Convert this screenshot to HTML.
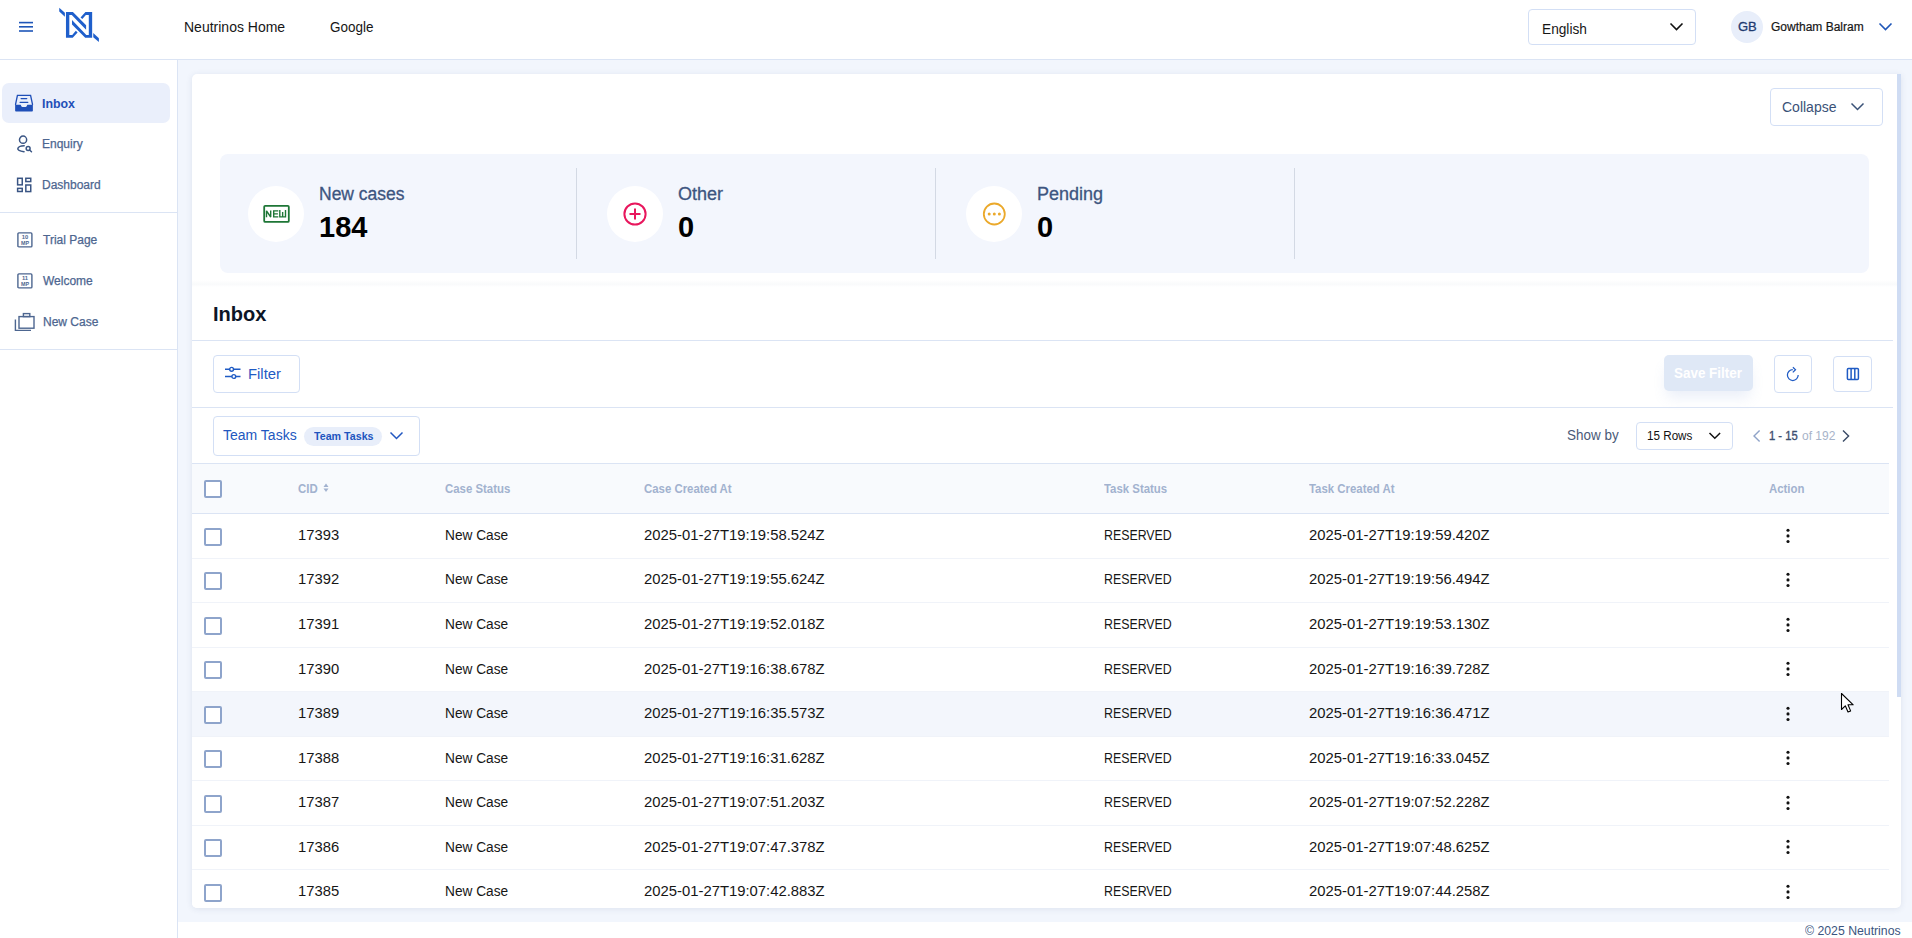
<!DOCTYPE html>
<html><head><meta charset="utf-8">
<style>
*{box-sizing:border-box;margin:0;padding:0}
html,body{width:1912px;height:938px;overflow:hidden;background:#f2f6fd;font-family:"Liberation Sans",sans-serif;color:#161616}
.a{position:absolute}
.t{position:absolute;white-space:nowrap;line-height:1}
#hdr{left:0;top:0;width:1912px;height:60px;background:#fff;border-bottom:1px solid #dbe4f4}
#side{left:0;top:60px;width:178px;height:878px;background:#fff;border-right:1px solid #dbe4f4}
#foot{left:178px;top:922px;width:1734px;height:16px;background:#fff}
#card{left:192px;top:74px;width:1709px;height:834px;background:#fff;border-radius:5px 0 5px 5px;box-shadow:0 1px 6px rgba(40,60,110,.10);overflow:hidden}
.navt{font-size:12px;color:#4d6690;-webkit-text-stroke:0.25px #4d6690}
.hline{height:1px;background:#dbe4f4}
.box{position:absolute;border:1px solid #d3dff5;border-radius:4px;background:#fff}
.th{font-size:12px;font-weight:700;color:#a2b2cf}
.td{font-size:14px;color:#161616}
.cb{position:absolute;width:18px;height:18px;border:2px solid #8ea4cb;border-radius:2px;background:#fff}
.row{position:absolute;left:0;width:1697px;height:45px;border-bottom:1px solid #eef2f9}
.dots{position:absolute;width:4px;height:15px}

.c1{transform:scaleX(1.056);transform-origin:0 0}
.c2{transform:scaleX(0.979);transform-origin:0 0}
.c3{transform:scaleX(1.06);transform-origin:0 0}
.c4{transform:scaleX(0.883);transform-origin:0 0}
.th{transform:scaleX(0.95);transform-origin:0 0}
</style></head>
<body>
<!-- HEADER -->
<div id="hdr" class="a">
  <svg class="a" style="left:19px;top:21px" width="15" height="12" viewBox="0 0 15 12"><g fill="#1f56b8"><rect x="0" y="0.8" width="14" height="1.6"/><rect x="0" y="5" width="14" height="1.6"/><rect x="0" y="9.2" width="14" height="1.6"/></g></svg>
  <svg class="a" style="left:55px;top:4px" width="50" height="42" viewBox="0 0 1117 938"><g fill="#1f5fcb">
    <polygon points="245,180 400,180 695,475 695,575 375,245 320,245 320,690 385,690 465,600 505,635 395,755 245,755"/>
    <polygon points="830,755 675,755 380,460 380,360 700,690 755,690 755,245 690,245 610,335 570,300 680,180 830,180"/>
    <polygon points="95,85 220,195 220,285 95,170"/>
    <polygon points="980,850 855,740 855,650 980,765"/>
  </g></svg>
  <div class="t" style="left:184px;top:20px;font-size:14px">Neutrinos Home</div>
  <div class="t" style="left:330px;top:20px;font-size:14px;transform:scaleX(0.962);transform-origin:0 0">Google</div>
  <div class="box" style="left:1528px;top:9px;width:168px;height:36px;border-radius:4px"></div>
  <div class="t" style="left:1542px;top:22px;font-size:14px;transform:scaleX(0.978);transform-origin:0 0">English</div>
  <svg class="a" style="left:1669px;top:22px" width="15" height="10" viewBox="0 0 15 10"><polyline points="1.5,1.5 7.5,7.5 13.5,1.5" fill="none" stroke="#111" stroke-width="1.6"/></svg>
  <div class="a" style="left:1731px;top:11px;width:32px;height:32px;border-radius:50%;background:#e8eefa"></div>
  <div class="t" style="left:1738px;top:20px;font-size:13px;font-weight:400;color:#1e3a70;-webkit-text-stroke:0.3px #1e3a70">GB</div>
  <div class="t" style="left:1771px;top:21px;font-size:12px;color:#161616;-webkit-text-stroke:0.2px #161616">Gowtham Balram</div>
  <svg class="a" style="left:1878px;top:22px" width="15" height="10" viewBox="0 0 15 10"><polyline points="1.5,1.5 7.5,7.5 13.5,1.5" fill="none" stroke="#1f56b8" stroke-width="1.6"/></svg>
</div>

<!-- SIDEBAR -->
<div id="side" class="a">
  <div class="a" style="left:2px;top:23px;width:168px;height:40px;border-radius:7px;background:#eaeffb"></div>
  <svg class="a" style="left:10px;top:30px" width="30" height="26" viewBox="0 0 1082 938"><g fill="none" stroke="#1f4fb8" stroke-linecap="round">
    <path d="M200,520 L268,192 L742,192 L812,520" stroke-width="48"/>
    <path d="M400,310 L605,310" stroke-width="42"/><path d="M362,445 L645,445" stroke-width="42"/></g>
    <path fill="#1f4fb8" d="M185,530 L385,530 L410,590 Q420,610 450,610 L560,610 Q590,610 600,590 L625,530 L825,530 L825,750 Q825,780 795,780 L215,780 Q185,780 185,750 Z"/>
  </svg>
  <div class="t" style="left:42px;top:38px;font-size:12px;font-weight:700;color:#1f4fb8;transform:scaleX(1.03);transform-origin:0 0">Inbox</div>

  <svg class="a" style="left:10px;top:70px" width="30" height="70" viewBox="0 0 402 938"><g fill="none" stroke="#3a5584" stroke-width="20" stroke-linecap="round">
    <circle cx="175" cy="130" r="48"/>
    <path d="M190,212 C95,215 60,280 188,290"/>
    <circle cx="243" cy="248" r="26"/><path d="M262,268 L288,292"/>
    <rect x="102" y="647" width="62" height="88"/><rect x="212" y="647" width="66" height="44"/>
    <rect x="102" y="782" width="62" height="42"/><rect x="212" y="737" width="66" height="88"/>
  </g></svg>
  <div class="t navt" style="left:42px;top:78px">Enquiry</div>
  <div class="t navt" style="left:42px;top:119px">Dashboard</div>
  <div class="a hline" style="left:0;top:152px;width:177px"></div>

  <svg class="a" style="left:17px;top:172px" width="16" height="16" viewBox="0 0 16 16"><rect x="0.9" y="0.9" width="14" height="14" rx="1" fill="none" stroke="#4d6690" stroke-width="1.4"/>
    <text x="8" y="7.2" font-size="5.8" font-weight="700" fill="#4d6690" text-anchor="middle" font-family="Liberation Sans">10</text>
    <text x="8" y="12.6" font-size="5.4" font-weight="700" fill="#4d6690" text-anchor="middle" font-family="Liberation Sans">MP</text></svg>
  <div class="t navt" style="left:43px;top:174px">Trial Page</div>
  <svg class="a" style="left:17px;top:213px" width="16" height="16" viewBox="0 0 16 16"><rect x="0.9" y="0.9" width="14" height="14" rx="1" fill="none" stroke="#4d6690" stroke-width="1.4"/>
    <text x="8" y="7.2" font-size="5.8" font-weight="700" fill="#4d6690" text-anchor="middle" font-family="Liberation Sans">11</text>
    <text x="8" y="12.6" font-size="5.4" font-weight="700" fill="#4d6690" text-anchor="middle" font-family="Liberation Sans">MP</text></svg>
  <div class="t navt" style="left:43px;top:215px">Welcome</div>
  <svg class="a" style="left:14px;top:252px" width="22" height="20" viewBox="0 0 22 20"><g fill="none" stroke="#4d6690" stroke-width="1.4">
    <rect x="9.4" y="1.6" width="6.4" height="3"/><rect x="5" y="4.6" width="15" height="11.6"/><path d="M1.4,7.4 L1.4,18.4 L17,18.4"/></g></svg>
  <div class="t navt" style="left:43px;top:256px">New Case</div>
  <div class="a hline" style="left:0;top:289px;width:177px"></div>
</div>

<!-- CARD -->
<div id="card" class="a">
<div class="a" style="left:-192px;top:-74px;width:1912px;height:938px">
  <div class="box" style="left:1770px;top:88px;width:113px;height:38px"></div>
  <div class="t" style="left:1782px;top:100px;font-size:14px;color:#3a5277">Collapse</div>
  <svg class="a" style="left:1850px;top:102px" width="15" height="10" viewBox="0 0 15 10"><polyline points="1.5,1.5 7.5,7.5 13.5,1.5" fill="none" stroke="#3a5277" stroke-width="1.5"/></svg>

  <div class="a" style="left:220px;top:154px;width:1649px;height:119px;border-radius:8px;background:#f3f6fd"></div>
  <div class="a" style="left:576px;top:168px;width:1px;height:91px;background:#d3d9e4"></div>
  <div class="a" style="left:935px;top:168px;width:1px;height:91px;background:#d3d9e4"></div>
  <div class="a" style="left:1294px;top:168px;width:1px;height:91px;background:#d3d9e4"></div>

  <div class="a" style="left:248px;top:186px;width:56px;height:56px;border-radius:50%;background:#fff"></div>
  <svg class="a" style="left:263px;top:204px" width="27" height="20" viewBox="0 0 27 20"><rect x="1.2" y="1.8" width="24.6" height="16.1" rx="1" fill="none" stroke="#1e7636" stroke-width="1.8"/>
    <g fill="none" stroke="#1e7636" stroke-width="1.4" stroke-linecap="square"><path d="M3.5,13.2 V6.8 L7.7,13 V6.6" stroke-linecap="butt" stroke-linejoin="bevel"/><path d="M14.6,6.9 H10.7 V12.9 H14.6 M10.7,9.9 H14.2"/><path d="M16.8,6.8 V12.9 H22.5 V6.8 M19.65,8.6 V12.9"/></g></svg>
  <div class="t" style="left:319px;top:185px;font-size:18px;color:#3d5580;-webkit-text-stroke:0.3px #3d5580;transform:scaleX(0.972);transform-origin:0 0">New cases</div>
  <div class="t" style="left:319px;top:213px;font-size:29px;font-weight:700;color:#000">184</div>

  <div class="a" style="left:607px;top:186px;width:56px;height:56px;border-radius:50%;background:#fff"></div>
  <svg class="a" style="left:623px;top:202px" width="25" height="25" viewBox="0 0 25 25"><g fill="none" stroke="#e8175d" stroke-width="2"><circle cx="12" cy="12" r="10.6"/><path d="M12,6.5 V17.5 M6.5,12 H17.5"/></g></svg>
  <div class="t" style="left:678px;top:185px;font-size:18px;color:#3d5580;-webkit-text-stroke:0.3px #3d5580">Other</div>
  <div class="t" style="left:678px;top:213px;font-size:29px;font-weight:700;color:#000">0</div>

  <div class="a" style="left:966px;top:186px;width:56px;height:56px;border-radius:50%;background:#fff"></div>
  <svg class="a" style="left:982px;top:202px" width="25" height="25" viewBox="0 0 25 25"><g fill="#eba92b"><circle cx="12.3" cy="12" r="10.5" fill="none" stroke="#eba92b" stroke-width="1.8"/><circle cx="7.2" cy="12" r="1.5"/><circle cx="12.3" cy="12" r="1.5"/><circle cx="17.4" cy="12" r="1.5"/></g></svg>
  <div class="t" style="left:1037px;top:185px;font-size:18px;color:#3d5580;-webkit-text-stroke:0.3px #3d5580">Pending</div>
  <div class="t" style="left:1037px;top:213px;font-size:29px;font-weight:700;color:#000">0</div>

  <div class="a" style="left:192px;top:280px;width:1705px;height:7px;background:linear-gradient(#fff,#f9fafb 60%,#fff)"></div>

  <div class="t" style="left:213px;top:304px;font-size:20px;font-weight:700;color:#0d1526">Inbox</div>
  <div class="a hline" style="left:192px;top:340px;width:1701px"></div>

  <div class="box" style="left:213px;top:355px;width:87px;height:38px"></div>
  <svg class="a" style="left:224px;top:366px" width="18" height="15" viewBox="0 0 18 15"><g fill="none" stroke="#1f5bc4" stroke-width="1.4"><path d="M1,3.3 H5.7 M9.5,3.3 H16.5 M1,10.5 H7.9 M11.7,10.5 H16.5"/><circle cx="7.6" cy="3.3" r="1.9"/><circle cx="9.8" cy="10.5" r="1.9"/></g></svg>
  <div class="t" style="left:248px;top:367px;font-size:14px;color:#1f5bc4;transform:scaleX(1.06);transform-origin:0 0">Filter</div>

  <div class="a" style="left:1664px;top:355px;width:89px;height:36px;border-radius:5px;background:#dfe8f6;box-shadow:0 9px 14px -3px rgba(120,150,210,.16)"></div>
  <div class="t" style="left:1674px;top:366px;font-size:14px;font-weight:700;color:#fff;transform:scaleX(0.96);transform-origin:0 0">Save Filter</div>
  <div class="box" style="left:1774px;top:355px;width:38px;height:38px"></div>
  <svg class="a" style="left:1785px;top:366px" width="16" height="17" viewBox="0 0 16 17"><g fill="none" stroke="#1f5bc4" stroke-width="1.25"><path d="M7.8,3.7 A5.4,5.4 0 1 0 13.2,9.1"/><path d="M7.9,1.2 L10.5,3.7 L7.8,6.4"/></g></svg>
  <div class="box" style="left:1833px;top:356px;width:39px;height:36px"></div>
  <svg class="a" style="left:1846px;top:367px" width="14" height="14" viewBox="0 0 14 14"><g fill="none" stroke="#1f5bc4" stroke-width="1.5"><rect x="1.4" y="1.4" width="11" height="11" rx="1"/><path d="M5.1,1.4 V12.4 M8.8,1.4 V12.4"/></g></svg>
  <div class="a hline" style="left:192px;top:407px;width:1701px"></div>

  <div class="box" style="left:213px;top:416px;width:207px;height:40px"></div>
  <div class="t" style="left:223px;top:428px;font-size:14px;color:#2257c0">Team Tasks</div>
  <div class="a" style="left:304px;top:427px;width:78px;height:19px;border-radius:10px;background:#e8eefa"></div>
  <div class="t" style="left:314px;top:431px;font-size:11px;font-weight:700;color:#2155bf;transform:scaleX(0.97);transform-origin:0 0">Team Tasks</div>
  <svg class="a" style="left:389px;top:431px" width="15" height="10" viewBox="0 0 15 10"><polyline points="1.5,1.5 7.5,7.5 13.5,1.5" fill="none" stroke="#2257c0" stroke-width="1.5"/></svg>

  <div class="t" style="left:1567px;top:428px;font-size:14px;color:#4a5a78;transform:scaleX(0.961);transform-origin:0 0">Show by</div>
  <div class="box" style="left:1636px;top:422px;width:97px;height:28px"></div>
  <div class="t" style="left:1647px;top:430px;font-size:12px;color:#111;transform:scaleX(0.972);transform-origin:0 0">15 Rows</div>
  <svg class="a" style="left:1708px;top:431px" width="14" height="10" viewBox="0 0 14 10"><polyline points="1.5,2 6.8,7.3 12.1,2" fill="none" stroke="#111" stroke-width="1.5"/></svg>
  <svg class="a" style="left:1752px;top:429px" width="10" height="14" viewBox="0 0 10 14"><polyline points="7.6,1.4 2,7 7.6,12.6" fill="none" stroke="#8fa3c8" stroke-width="1.4"/></svg>
  <div class="t" style="left:1769px;top:430px;font-size:12px;font-weight:400;color:#3d4f70;-webkit-text-stroke:0.35px #3d4f70;transform:scaleX(0.935);transform-origin:0 0">1 - 15</div>
  <div class="t" style="left:1802px;top:430px;font-size:12px;color:#a7b3c9">of 192</div>
  <svg class="a" style="left:1841px;top:429px" width="10" height="14" viewBox="0 0 10 14"><polyline points="2,1.4 7.6,7 2,12.6" fill="none" stroke="#3a4a66" stroke-width="1.4"/></svg>

  <div class="a" style="left:192px;top:463px;width:1697px;height:51px;background:#f8fafd;border-top:1px solid #dbe4f4;border-bottom:1px solid #dbe4f4"></div>
  <div class="cb" style="left:204px;top:480px"></div>
  <div class="t th" style="left:298px;top:483px">CID</div>
  <svg class="a" style="left:323px;top:483px" width="6" height="10" viewBox="0 0 6 10"><g fill="#a2b2cf"><path d="M0.5,4 L3,0.6 L5.5,4 Z"/><path d="M0.5,5.6 L3,9 L5.5,5.6 Z"/></g></svg>
  <div class="t th" style="left:445px;top:483px">Case Status</div>
  <div class="t th" style="left:644px;top:483px">Case Created At</div>
  <div class="t th" style="left:1104px;top:483px">Task Status</div>
  <div class="t th" style="left:1309px;top:483px">Task Created At</div>
  <div class="t th" style="left:1769px;top:483px">Action</div>
<div class="a" style="left:192px;top:514.0px;width:1697px;height:44.5px;background:#fff;border-bottom:1px solid #f0f3f9"></div>
<div class="cb" style="left:204px;top:527.5px"></div>
<div class="t td c1" style="left:298px;top:528px">17393</div>
<div class="t td c2" style="left:445px;top:528px">New Case</div>
<div class="t td c3" style="left:644px;top:528px">2025-01-27T19:19:58.524Z</div>
<div class="t td c4" style="left:1104px;top:528px">RESERVED</div>
<div class="t td c3" style="left:1309px;top:528px">2025-01-27T19:19:59.420Z</div>
<svg class="a" style="left:1786px;top:527.5px" width="4" height="16" viewBox="0 0 4 16"><g fill="#111"><circle cx="2" cy="2.3" r="1.55"/><circle cx="2" cy="7.9" r="1.55"/><circle cx="2" cy="13.5" r="1.55"/></g></svg>
<div class="a" style="left:192px;top:558.5px;width:1697px;height:44.5px;background:#fff;border-bottom:1px solid #f0f3f9"></div>
<div class="cb" style="left:204px;top:572.0px"></div>
<div class="t td c1" style="left:298px;top:572px">17392</div>
<div class="t td c2" style="left:445px;top:572px">New Case</div>
<div class="t td c3" style="left:644px;top:572px">2025-01-27T19:19:55.624Z</div>
<div class="t td c4" style="left:1104px;top:572px">RESERVED</div>
<div class="t td c3" style="left:1309px;top:572px">2025-01-27T19:19:56.494Z</div>
<svg class="a" style="left:1786px;top:572.0px" width="4" height="16" viewBox="0 0 4 16"><g fill="#111"><circle cx="2" cy="2.3" r="1.55"/><circle cx="2" cy="7.9" r="1.55"/><circle cx="2" cy="13.5" r="1.55"/></g></svg>
<div class="a" style="left:192px;top:603.0px;width:1697px;height:44.5px;background:#fff;border-bottom:1px solid #f0f3f9"></div>
<div class="cb" style="left:204px;top:616.5px"></div>
<div class="t td c1" style="left:298px;top:617px">17391</div>
<div class="t td c2" style="left:445px;top:617px">New Case</div>
<div class="t td c3" style="left:644px;top:617px">2025-01-27T19:19:52.018Z</div>
<div class="t td c4" style="left:1104px;top:617px">RESERVED</div>
<div class="t td c3" style="left:1309px;top:617px">2025-01-27T19:19:53.130Z</div>
<svg class="a" style="left:1786px;top:616.5px" width="4" height="16" viewBox="0 0 4 16"><g fill="#111"><circle cx="2" cy="2.3" r="1.55"/><circle cx="2" cy="7.9" r="1.55"/><circle cx="2" cy="13.5" r="1.55"/></g></svg>
<div class="a" style="left:192px;top:647.5px;width:1697px;height:44.5px;background:#fff;border-bottom:1px solid #f0f3f9"></div>
<div class="cb" style="left:204px;top:661.0px"></div>
<div class="t td c1" style="left:298px;top:662px">17390</div>
<div class="t td c2" style="left:445px;top:662px">New Case</div>
<div class="t td c3" style="left:644px;top:662px">2025-01-27T19:16:38.678Z</div>
<div class="t td c4" style="left:1104px;top:662px">RESERVED</div>
<div class="t td c3" style="left:1309px;top:662px">2025-01-27T19:16:39.728Z</div>
<svg class="a" style="left:1786px;top:661.0px" width="4" height="16" viewBox="0 0 4 16"><g fill="#111"><circle cx="2" cy="2.3" r="1.55"/><circle cx="2" cy="7.9" r="1.55"/><circle cx="2" cy="13.5" r="1.55"/></g></svg>
<div class="a" style="left:192px;top:692.0px;width:1697px;height:44.5px;background:#f3f6fc;border-bottom:1px solid #f0f3f9"></div>
<div class="cb" style="left:204px;top:705.5px"></div>
<div class="t td c1" style="left:298px;top:706px">17389</div>
<div class="t td c2" style="left:445px;top:706px">New Case</div>
<div class="t td c3" style="left:644px;top:706px">2025-01-27T19:16:35.573Z</div>
<div class="t td c4" style="left:1104px;top:706px">RESERVED</div>
<div class="t td c3" style="left:1309px;top:706px">2025-01-27T19:16:36.471Z</div>
<svg class="a" style="left:1786px;top:705.5px" width="4" height="16" viewBox="0 0 4 16"><g fill="#111"><circle cx="2" cy="2.3" r="1.55"/><circle cx="2" cy="7.9" r="1.55"/><circle cx="2" cy="13.5" r="1.55"/></g></svg>
<div class="a" style="left:192px;top:736.5px;width:1697px;height:44.5px;background:#fff;border-bottom:1px solid #f0f3f9"></div>
<div class="cb" style="left:204px;top:750.0px"></div>
<div class="t td c1" style="left:298px;top:751px">17388</div>
<div class="t td c2" style="left:445px;top:751px">New Case</div>
<div class="t td c3" style="left:644px;top:751px">2025-01-27T19:16:31.628Z</div>
<div class="t td c4" style="left:1104px;top:751px">RESERVED</div>
<div class="t td c3" style="left:1309px;top:751px">2025-01-27T19:16:33.045Z</div>
<svg class="a" style="left:1786px;top:750.0px" width="4" height="16" viewBox="0 0 4 16"><g fill="#111"><circle cx="2" cy="2.3" r="1.55"/><circle cx="2" cy="7.9" r="1.55"/><circle cx="2" cy="13.5" r="1.55"/></g></svg>
<div class="a" style="left:192px;top:781.0px;width:1697px;height:44.5px;background:#fff;border-bottom:1px solid #f0f3f9"></div>
<div class="cb" style="left:204px;top:794.5px"></div>
<div class="t td c1" style="left:298px;top:795px">17387</div>
<div class="t td c2" style="left:445px;top:795px">New Case</div>
<div class="t td c3" style="left:644px;top:795px">2025-01-27T19:07:51.203Z</div>
<div class="t td c4" style="left:1104px;top:795px">RESERVED</div>
<div class="t td c3" style="left:1309px;top:795px">2025-01-27T19:07:52.228Z</div>
<svg class="a" style="left:1786px;top:794.5px" width="4" height="16" viewBox="0 0 4 16"><g fill="#111"><circle cx="2" cy="2.3" r="1.55"/><circle cx="2" cy="7.9" r="1.55"/><circle cx="2" cy="13.5" r="1.55"/></g></svg>
<div class="a" style="left:192px;top:825.5px;width:1697px;height:44.5px;background:#fff;border-bottom:1px solid #f0f3f9"></div>
<div class="cb" style="left:204px;top:839.0px"></div>
<div class="t td c1" style="left:298px;top:840px">17386</div>
<div class="t td c2" style="left:445px;top:840px">New Case</div>
<div class="t td c3" style="left:644px;top:840px">2025-01-27T19:07:47.378Z</div>
<div class="t td c4" style="left:1104px;top:840px">RESERVED</div>
<div class="t td c3" style="left:1309px;top:840px">2025-01-27T19:07:48.625Z</div>
<svg class="a" style="left:1786px;top:839.0px" width="4" height="16" viewBox="0 0 4 16"><g fill="#111"><circle cx="2" cy="2.3" r="1.55"/><circle cx="2" cy="7.9" r="1.55"/><circle cx="2" cy="13.5" r="1.55"/></g></svg>
<div class="a" style="left:192px;top:870.0px;width:1697px;height:44.5px;background:#fff;border-bottom:1px solid #f0f3f9"></div>
<div class="cb" style="left:204px;top:883.5px"></div>
<div class="t td c1" style="left:298px;top:884px">17385</div>
<div class="t td c2" style="left:445px;top:884px">New Case</div>
<div class="t td c3" style="left:644px;top:884px">2025-01-27T19:07:42.883Z</div>
<div class="t td c4" style="left:1104px;top:884px">RESERVED</div>
<div class="t td c3" style="left:1309px;top:884px">2025-01-27T19:07:44.258Z</div>
<svg class="a" style="left:1786px;top:883.5px" width="4" height="16" viewBox="0 0 4 16"><g fill="#111"><circle cx="2" cy="2.3" r="1.55"/><circle cx="2" cy="7.9" r="1.55"/><circle cx="2" cy="13.5" r="1.55"/></g></svg>
  <div class="a" style="left:1897px;top:74px;width:4px;height:623px;background:#cfdcf3"></div>
</div>
</div>

<div id="foot" class="a"></div>
<div class="t" style="left:1805px;top:925px;font-size:12px;color:#3a5580;transform:scaleX(1.022);transform-origin:0 0">© 2025 Neutrinos</div>
<svg class="a" style="left:1840px;top:692px" width="16" height="22" viewBox="0 0 16 22"><path d="M1.5,1.5 L1.5,17.5 L5.3,13.8 L8,20 L10.6,18.9 L8,12.8 L13.2,12.8 Z" fill="#fff" stroke="#000" stroke-width="1.1" stroke-linejoin="round"/></svg>
</body></html>
